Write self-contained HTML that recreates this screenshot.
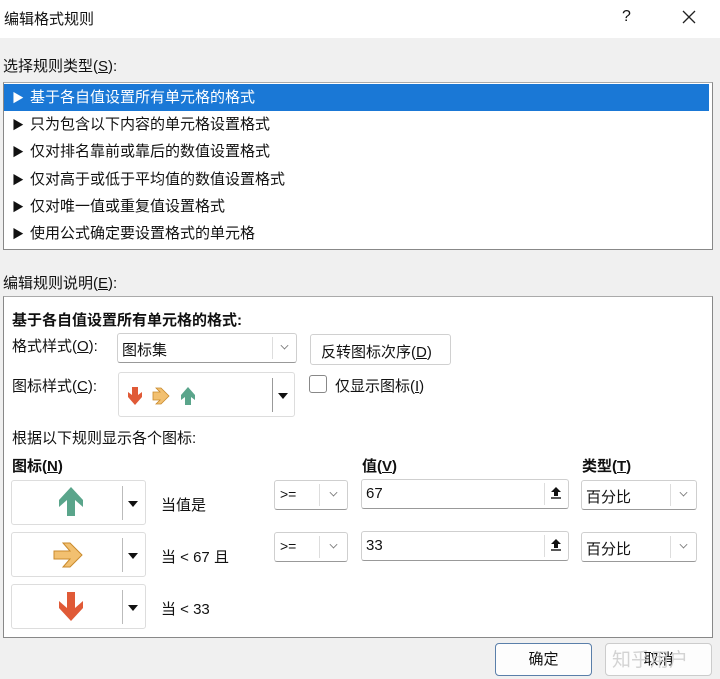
<!DOCTYPE html>
<html><head><meta charset="utf-8"><style>
*{box-sizing:border-box;margin:0;padding:0}
body{width:720px;height:679px;background:#f0f0f0;font-family:"Liberation Sans","Noto Sans CJK SC",sans-serif;font-size:15px;color:#111;position:relative;overflow:hidden}
.a{position:absolute;white-space:nowrap}
.box{position:absolute;background:#fff;border:1px solid #c8c8c8;border-radius:3px}
.dd{position:absolute;background:#fff;border:1px solid #cfcfcf;border-bottom:1px solid #999;border-radius:3px}
.chev{position:absolute;width:7px;height:7px;border-right:1px solid #777;border-bottom:1px solid #777;transform:rotate(45deg)}
.tri{position:absolute;width:0;height:0;border-left:5px solid transparent;border-right:5px solid transparent;border-top:6px solid #111}
.row{position:absolute;left:4px;width:705px;height:27px;line-height:27px;padding-left:8px;font-size:15px}
.row b{font-weight:normal;font-size:12px;display:inline-block;width:18px}
</style></head><body>
<div class="a" style="left:0;top:0;width:720px;height:38px;background:#fff"></div>
<div class="a" style="left:4px;top:8px;font-size:15px">编辑格式规则</div>
<div class="a" style="left:622px;top:8px;font-size:16px">?</div>
<svg class="a" style="left:682px;top:10px" width="14" height="14"><path d="M1 1L13 13M13 1L1 13" stroke="#222" stroke-width="1.3"/></svg>
<div class="a" style="left:3px;top:55px">选择规则类型(<u>S</u>):</div>
<div class="a" style="left:3px;top:82px;width:710px;height:168px;background:#fff;border:1px solid #888;border-top-color:#aaa"></div>
<div class="row" style="top:84px;background:#1a78d6;color:#fff"><b>▶</b>基于各自值设置所有单元格的格式</div>
<div class="row" style="top:111px"><b>▶</b>只为包含以下内容的单元格设置格式</div>
<div class="row" style="top:138px"><b>▶</b>仅对排名靠前或靠后的数值设置格式</div>
<div class="row" style="top:166px"><b>▶</b>仅对高于或低于平均值的数值设置格式</div>
<div class="row" style="top:193px"><b>▶</b>仅对唯一值或重复值设置格式</div>
<div class="row" style="top:220px"><b>▶</b>使用公式确定要设置格式的单元格</div>
<div class="a" style="left:3px;top:272px">编辑规则说明(<u>E</u>):</div>
<div class="a" style="left:3px;top:296px;width:710px;height:342px;background:#fff;border:1px solid #888;border-top-color:#aaa"></div>
<div class="a" style="left:12px;top:309px;font-weight:bold">基于各自值设置所有单元格的格式:</div>
<div class="a" style="left:12px;top:335px">格式样式(<u>O</u>):</div>
<div class="dd" style="left:117px;top:333px;width:180px;height:30px"><span class="a" style="left:4px;top:5px">图标集</span><div class="a" style="left:154px;top:3px;height:22px;border-left:1px solid #ddd"></div><div class="chev" style="left:163px;top:8px;transform:rotate(45deg) scale(.8)"></div></div>
<div class="box" style="left:310px;top:334px;width:141px;height:31px;border-color:#d0d0d0"><span class="a" style="left:10px;top:6px">反转图标次序(<u>D</u>)</span></div>
<div class="a" style="left:12px;top:375px">图标样式(<u>C</u>):</div>
<div class="box" style="left:118px;top:372px;width:177px;height:45px;border-color:#ddd">
<svg class="a" style="left:8px;top:12px" width="80" height="22" viewBox="0 0 80 22">
<path d="M5 2h6v8l4-3v5l-7 8-7-8v-5l4 3z" fill="#e05a37"/>
<path d="M26 7h7l-4-4h5l8 8-8 8h-5l4-4h-7z" fill="#f2c070" stroke="#c98a2c" stroke-width=".8"/>
<path d="M61 2l7 8v5l-4-3v8h-6v-8l-4 3v-5z" fill="#5aa58b"/>
</svg>
<div class="a" style="left:153px;top:5px;height:34px;border-left:1px solid #999"></div><div class="tri" style="left:159px;top:20px"></div></div>
<div class="a" style="left:309px;top:375px;width:18px;height:18px;border:1px solid #888;border-radius:3px;background:#fff"></div>
<div class="a" style="left:335px;top:375px">仅显示图标(<u>I</u>)</div>
<div class="a" style="left:12px;top:427px">根据以下规则显示各个图标:</div>
<div class="a" style="left:12px;top:455px;font-weight:bold">图标(<u>N</u>)</div>
<div class="a" style="left:362px;top:455px;font-weight:bold">值(<u>V</u>)</div>
<div class="a" style="left:582px;top:455px;font-weight:bold">类型(<u>T</u>)</div>

<div class="box" style="left:11px;top:480px;width:135px;height:45px;border-color:#ddd"><svg class="a" style="left:45px;top:5px" width="28" height="34"><path d="M14 1l12 13v7l-8-7v16h-8v-16l-8 7v-7z" fill="#5aa58b"/></svg><div class="a" style="left:110px;top:5px;height:34px;border-left:1px solid #bbb"></div><div class="tri" style="left:116px;top:20px"></div></div>
<div class="box" style="left:11px;top:532px;width:135px;height:45px;border-color:#ddd"><svg class="a" style="left:40px;top:7px" width="36" height="30"><path d="M2 11h16l-7-8h7l12 12-12 12h-7l7-8h-16z" fill="#f2c070" stroke="#c98a2c" stroke-width="1"/></svg><div class="a" style="left:110px;top:5px;height:34px;border-left:1px solid #bbb"></div><div class="tri" style="left:116px;top:20px"></div></div>
<div class="box" style="left:11px;top:584px;width:135px;height:45px;border-color:#ddd"><svg class="a" style="left:45px;top:6px" width="28" height="34"><path d="M10 1h8v16l8-7v7l-12 13-12-13v-7l8 7z" fill="#e05a37"/></svg><div class="a" style="left:110px;top:5px;height:34px;border-left:1px solid #bbb"></div><div class="tri" style="left:116px;top:20px"></div></div>
<div class="a" style="left:161px;top:494px">当值是</div>
<div class="a" style="left:161px;top:546px">当 &lt; 67 且</div>
<div class="a" style="left:161px;top:598px">当 &lt; 33</div>

<div class="dd" style="left:274px;top:480px;width:74px;height:30px"><span class="a" style="left:5px;top:5px;font-size:14px">&gt;=</span><div class="a" style="left:44px;top:3px;height:22px;border-left:1px solid #ddd"></div><div class="chev" style="left:55px;top:8px;transform:rotate(45deg) scale(.8)"></div></div>
<div class="dd" style="left:274px;top:532px;width:74px;height:30px"><span class="a" style="left:5px;top:5px;font-size:14px">&gt;=</span><div class="a" style="left:44px;top:3px;height:22px;border-left:1px solid #ddd"></div><div class="chev" style="left:55px;top:8px;transform:rotate(45deg) scale(.8)"></div></div>
<div class="dd" style="left:361px;top:479px;width:208px;height:30px"><span class="a" style="left:4px;top:5px">67</span><div class="a" style="left:182px;top:3px;height:22px;border-left:1px solid #ddd"></div><svg class="a" style="left:188px;top:6px" width="12" height="14"><path d="M6 1l5 5h-3v4h-4v-4h-3z" fill="#111"/><path d="M1 12h10" stroke="#111" stroke-width="1.4"/></svg></div>
<div class="dd" style="left:361px;top:531px;width:208px;height:30px"><span class="a" style="left:4px;top:5px">33</span><div class="a" style="left:182px;top:3px;height:22px;border-left:1px solid #ddd"></div><svg class="a" style="left:188px;top:6px" width="12" height="14"><path d="M6 1l5 5h-3v4h-4v-4h-3z" fill="#111"/><path d="M1 12h10" stroke="#111" stroke-width="1.4"/></svg></div>
<div class="dd" style="left:581px;top:480px;width:116px;height:30px"><span class="a" style="left:4px;top:5px">百分比</span><div class="a" style="left:88px;top:3px;height:22px;border-left:1px solid #ddd"></div><div class="chev" style="left:98px;top:8px;transform:rotate(45deg) scale(.8)"></div></div>
<div class="dd" style="left:581px;top:532px;width:116px;height:30px"><span class="a" style="left:4px;top:5px">百分比</span><div class="a" style="left:88px;top:3px;height:22px;border-left:1px solid #ddd"></div><div class="chev" style="left:98px;top:8px;transform:rotate(45deg) scale(.8)"></div></div>

<div class="a" style="left:495px;top:643px;width:97px;height:33px;background:#fdfdfd;border:1px solid #5a7faa;border-radius:4px;text-align:center;line-height:31px">确定</div>
<div class="a" style="left:605px;top:643px;width:107px;height:33px;background:#fdfdfd;border:1px solid #ccc;border-radius:4px;text-align:center;line-height:31px">取消</div>
<div class="a" style="left:612px;top:645px;font-size:19px;color:rgba(200,200,200,.8)">知乎用户</div>
</body></html>
